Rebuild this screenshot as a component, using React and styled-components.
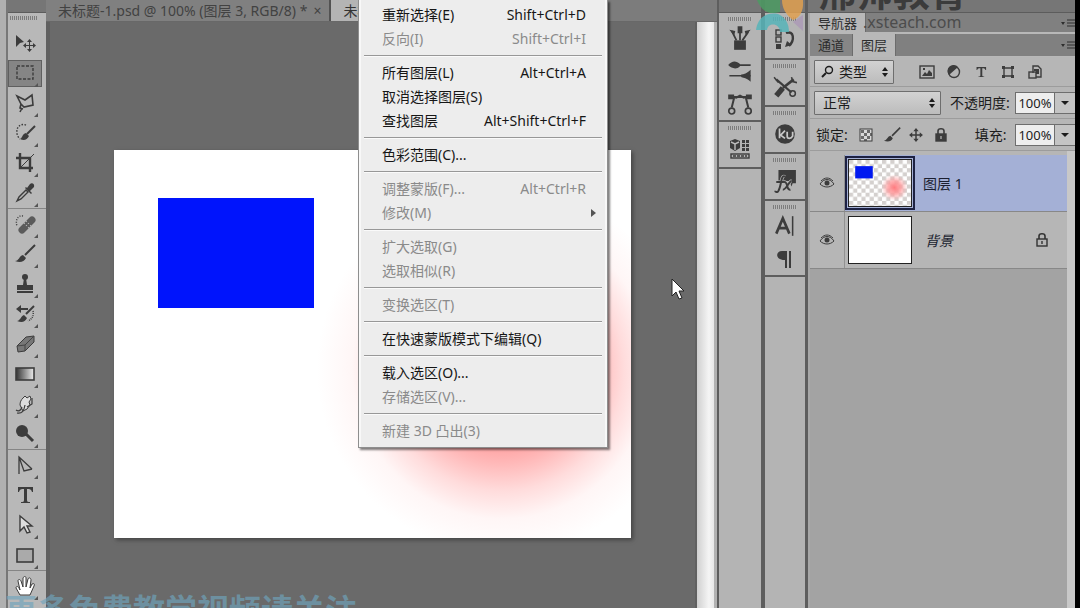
import React from "react";
import styled, { createGlobalStyle, css } from "styled-components";

const Global = createGlobalStyle`
  * { box-sizing: border-box; }
  html, body { margin: 0; background: #6a6a6a; }
  body { font-family: "Noto Sans", "Noto Sans CJK SC", sans-serif; color: #1c1c1c; }
  button, input, select { font: inherit; color: inherit; margin: 0; padding: 0; border: 0; background: none; border-radius: 0; }
  svg { display: block; }
`;

const Screen = styled.div`
  position: relative;
  display: flex;
  height: 100vh;
  overflow: hidden;
`;

/* ---------- tool bar ---------- */
const WindowEdge = styled.div`
  flex: none;
  width: 8px;
  background: #b0b0b0;
  border-right: 2px solid #777;
`;
const Toolbar = styled.aside`
  flex: none;
  width: 38px;
  background: #b8b8b8;
`;
const DockHeader = styled.div`
  flex: none;
  height: 13px;
  background: #767676;
  border-bottom: 1px solid #5c5c5c;
`;
const Grip = styled.div`
  width: ${(p) => p.$w || 24}px;
  height: 4px;
  margin: ${(p) => p.$m || "0 auto"};
  background: repeating-linear-gradient(90deg, #7c7c7c 0 1px, #b8b8b8 1px 2px);
`;
const ToolGroup = styled.div`
  display: flex;
  flex-direction: column;
  & + & { border-top: 1px solid #858585; }
`;
const Tool = styled.button`
  position: relative;
  height: 30px;
  display: grid;
  place-items: center;
  padding-right: 4px;
  color: #3c3c3c;
  ${(p) => p.$active && css`
    &::before {
      content: "";
      position: absolute;
      inset: 2px 4px 1px 0;
      background: #858585;
      border: 1px solid #5f5f5f;
    }
  `}
  svg { position: relative; }
  ${(p) => p.$more && css`
    &::after {
      content: "";
      position: absolute;
      right: 8px;
      bottom: 1px;
      border-left: 4px solid transparent;
      border-bottom: 4px solid #555;
    }
  `}
`;

/* ---------- document ---------- */
const Document = styled.main`
  flex: 1;
  min-width: 0;
  display: flex;
  flex-direction: column;
  background: #6a6a6a;
`;
const TabBar = styled.nav`
  flex: none;
  display: flex;
  height: 22px;
  background: #7c7c7c;
  border-bottom: 1px solid #686868;
`;
const DocTab = styled.button`
  display: flex;
  align-items: center;
  gap: 6px;
  padding: 0 8px 0 12px;
  font-size: 14px;
  line-height: 20px;
  white-space: nowrap;
  color: ${(p) => (p.$active ? "#333" : "#424242")};
  background: ${(p) => (p.$active ? "#b4b4b4" : "#808080")};
  border-right: 2px solid #525252;
`;
const Viewport = styled.div`
  flex: 1;
  min-height: 0;
  display: flex;
`;
const Stage = styled.div`
  flex: 1;
  display: flex;
  justify-content: center;
  align-items: flex-start;
  padding-top: 128px;
  border-left: 4px solid #606060;
  border-right: 2px solid #606060;
`;
const Canvas = styled.div`
  position: relative;
  width: 517px;
  height: 388px;
  overflow: hidden;
  background: radial-gradient(circle at 388px 219px, #ff5c5c 0, #ff9090 60px, #ffb8b8 94px, #ffdcdc 122px, #fff6f6 150px, #fff 185px);
`;
const CanvasShadow = styled.div`
  box-shadow: 2px 2px 4px #444;
`;
const BlueBox = styled.div`
  position: absolute;
  left: 44px;
  top: 48px;
  width: 156px;
  height: 110px;
  background: #0014fc;
`;
const ScrollTrack = styled.div`
  flex: none;
  width: 20px;
  background: linear-gradient(90deg, #d0d0d0, #f5f5f5 70%, #e8e8e8);
  border-right: 3px solid #b2b2b2;
`;

/* ---------- drop-down menu ---------- */
const Menu = styled.div`
  position: absolute;
  left: 358px;
  top: 0;
  width: 250px;
  padding: 3px 5px 4px;
  background: #ededed;
  border: solid #8e8e8e;
  border-width: 0 1px 1px;
  box-shadow: inset 2px 0 #f8f8f8, inset -2px 0 #f8f8f8, 2px 2px 2px rgba(0, 0, 0, 0.5);
`;
const MenuItem = styled.button`
  display: flex;
  align-items: center;
  justify-content: space-between;
  width: 100%;
  height: 24px;
  padding: 0 16px 0 18px;
  font-size: 14px;
  line-height: 24px;
  white-space: nowrap;
  color: #161616;
  &:disabled { color: #8a8a8a; }
`;
const Divider = styled.hr`
  height: 2px;
  margin: 4px 0;
  border: 0;
  border-top: 1px solid #989898;
  background: #fafafa;
`;
const SubArrow = styled.span`
  margin-right: -10px;
  border: 4px solid transparent;
  border-left: 5px solid #555;
  border-right: 0;
`;

/* ---------- icon docks ---------- */
const Dock = styled.aside`
  flex: none;
  width: ${(p) => p.$w}px;
  background: #b4b4b4;
  border-left: ${(p) => p.$edge}px solid #5e5e5e;
`;
const DockSection = styled.section`
  display: flex;
  flex-direction: column;
  padding-top: 4px;
  border-bottom: 2px solid #5e5e5e;
`;
const DockButton = styled.button`
  display: grid;
  place-items: center;
  width: 100%;
  height: ${(p) => p.$h || 38}px;
  color: #3c3c3c;
`;

/* ---------- layers panel ---------- */
const Panel = styled.section`
  flex: none;
  width: 270px;
  display: flex;
  flex-direction: column;
  background: #a3a3a3;
  border-left: 3px solid #5e5e5e;
  box-shadow: inset 2px 0 #a8a8a8;
  overflow: hidden;
`;
const PanelTabs = styled.div`
  flex: none;
  display: flex;
  align-items: stretch;
  height: ${(p) => p.$h}px;
  margin-left: 2px;
  background: #808080;
  border-bottom: ${(p) => p.$line}px solid #b8b8b8;
`;
const PanelTab = styled.button`
  padding: 0 8px;
  font-size: 13px;
  line-height: 16px;
  white-space: nowrap;
  color: #2c2c2c;
  background: ${(p) => (p.$active ? "#b8b8b8" : "#868686")};
  border-right: 1px solid #6c6c6c;
`;
const PanelMenu = styled.button`
  margin-left: auto;
  color: #2e2e2e;
`;
const Row = styled.div`
  flex: none;
  display: flex;
  align-items: center;
  height: ${(p) => p.$h}px;
  margin-left: 2px;
  padding-left: ${(p) => p.$pad || 4}px;
  background: #b6b6b6;
  border-bottom: 1px solid #9c9c9c;
  white-space: nowrap;
`;
const SelectBox = styled.div`
  position: relative;
  flex: none;
  display: flex;
  align-items: center;
  width: ${(p) => p.$w}px;
  height: 24px;
  background: linear-gradient(#d2d2d2, #bcbcbc);
  border: 1px solid #6e6e6e;
  border-radius: 1px;
  select {
    appearance: none;
    width: 100%;
    height: 100%;
    padding-left: ${(p) => p.$text}px;
    font-size: 14px;
    line-height: 20px;
    outline: 0;
  }
  svg { position: absolute; pointer-events: none; }
  .search { left: 6px; }
  .arrows { right: 4px; }
`;
const IconRow = styled.div`
  display: flex;
  align-items: center;
  gap: ${(p) => p.$gap}px;
  margin-left: ${(p) => p.$ml}px;
`;
const IconButton = styled.button`
  display: grid;
  place-items: center;
  width: 16px;
  height: 20px;
  color: #3c3c3c;
`;
const Label = styled.label`
  flex: none;
  font-size: 14px;
  line-height: 20px;
  margin-left: ${(p) => p.$ml || 0}px;
`;
const Percent = styled.div`
  flex: none;
  display: flex;
  width: 60px;
  height: 22px;
  margin-left: auto;
  border: 1px solid #6e6e6e;
  border-right: 0;
  background: #c4c4c4;
  input {
    width: 39px;
    text-align: center;
    font-size: 13px;
    background: #eee;
    border-right: 1px solid #6e6e6e;
    outline: 0;
  }
  button { flex: 1; display: grid; place-items: center; }
`;
const LayerList = styled.ul`
  list-style: none;
  margin: 0 8px 0 2px;
  padding: 0;
  box-shadow: 8px 0 #c8c8c8;
  border-top: 4px solid #b6b6b6;
  flex: 1;
`;
const Layer = styled.li`
  display: flex;
  align-items: center;
  height: 57px;
  background: ${(p) => (p.$active ? "#a4b0d6" : "#b6b6b6")};
  border-bottom: 1px solid #888;
  font-size: 14px;
  color: #1b1f30;
`;
const Eye = styled.button`
  flex: none;
  display: grid;
  place-items: center;
  width: 35px;
  height: 100%;
  background: #b6b6b6;
  border-right: 1px solid #929292;
  color: #3c3c3c;
`;
const Thumb = styled.div`
  flex: none;
  width: 70px;
  height: 54px;
  padding: 1px;
  margin: 0 8px 0 0;
  border: 2px solid ${(p) => (p.$active ? "#1d2142" : "transparent")};
  svg { width: 100%; height: 100%; border: 1px solid #222; background: #fff; }
`;
const LayerName = styled.span`
  flex: 1;
  font-style: ${(p) => (p.$italic ? "italic" : "normal")};
  padding-left: ${(p) => (p.$italic ? 2 : 0)}px;
`;
const LayerLock = styled.span`
  margin-right: 18px;
  color: #333;
`;
const ScreenEdge = styled.div`
  flex: none;
  width: 5px;
  background: #000;
`;

/* ---------- overlays ---------- */
const Brand = styled.div`
  position: absolute;
  right: 113px;
  top: -26px;
  pointer-events: none;
  color: #3b3b3b;
  strong {
    display: block;
    font-size: 37px;
    line-height: 38px;
    font-weight: 700;
  }
  span {
    display: block;
    margin-left: 44px;
    font-size: 16px;
    line-height: 20px;
    color: #4c4c4c;
  }
`;
const BrandMark = styled.svg`
  position: absolute;
  right: 275px;
  top: 0;
`;
const Caption = styled.div`
  position: absolute;
  left: 5px;
  bottom: -18px;
  font-size: 32px;
  line-height: 32px;
  font-weight: 700;
  white-space: nowrap;
  color: #70a5bd;
  opacity: 0.65;
  pointer-events: none;
`;
const Pointer = styled.svg`
  position: absolute;
  left: 671px;
  top: 278px;
  pointer-events: none;
`;

const S = ({ children, w = 22, h = 22, box = "0 0 22 22", ...rest }) => (
  <svg width={w} height={h} viewBox={box} fill="none" stroke="currentColor" strokeWidth="1.4" aria-hidden="true" {...rest}>
    {children}
  </svg>
);
const solid = { fill: "currentColor", stroke: "none" };

const FourWay = ({ x = 0, y = 0 }) => (
  <g transform={`translate(${x} ${y})`}>
    <path d="M5.500 1v9M1 5.500h9" />
    <path {...solid} d="M5.500-1 8 2H3zM5.500 12 8 9H3zM-1 5.500 2 3v5zM12 5.500 9 3v5z" />
  </g>
);

const icons = {
  move: <S><path {...solid} d="M2 3v12l4-4 4-1z" /><g strokeWidth="1"><FourWay x={10} y={8} /></g></S>,
  marquee: <S><rect x="3" y="4" width="16" height="13" strokeDasharray="3 1.500" /></S>,
  lasso: <S><path d="M3 4l8 4 7-5 1 10-9 2-3-3zM7 12l-1 4 3 1M8 16l-2 4" strokeWidth="1.600" /></S>,
  quick: <S><path strokeDasharray="1.500 1.500" d="M12 3C7 1 2 5 3 11c0 3 2 5 3 6" /><path {...solid} d="M6 17c2 0 2-5 6-6l3 3c-2 4-5 5-9 3z" /><path d="M13 12l8-8" strokeWidth="2" /></S>,
  crop: <S strokeWidth="2.400"><path d="M6 1v15h13M2 6h14v14" /><path d="M7 15L20 2" strokeWidth="1" /></S>,
  eyedrop: <S><path d="M3 19l2-4 7-7 2 2-7 7z" /><path {...solid} d="M11 6l6 6 1-1-2-2 4-4c1-3-2-5-4-3l-3 4-1-1z" /></S>,
  heal: <S><path strokeDasharray="1 1.500" d="M9 3C4 2 1 7 3 13" /><path d="M8 17L18 7" strokeWidth="7" strokeLinecap="round" opacity=".75" /><path d="M10 10l5 5M12 8l5 5" stroke="#bbb" strokeDasharray="1 2" /></S>,
  brush: <S><path d="M11 12L21 2" strokeWidth="2" /><path {...solid} d="M1 18c4 0 4-5 8-6l3 3c-2 4-6 5-11 3z" /></S>,
  stamp: <S><circle cx="11" cy="4" r="3" {...solid} /><path {...solid} d="M10 5h2l1 7h6v5H3v-5h6z" /><path d="M3 19h16" strokeWidth="2" /></S>,
  history: <S><path d="M12 11l8-8" strokeWidth="2" /><path {...solid} d="M3 18c3 0 4-5 7-6l3 3c-2 4-5 5-10 3zM2 6l5-4v3h7v2H7v3z" /><path d="M19 8c1 5-1 8-5 10" strokeDasharray="1 1" /></S>,
  eraser: <S><path d="M3 13L12 4l8-1v6l-9 9-7 1z" fill="#777" strokeWidth="1" /><path d="M3 13l8-1 9-9M11 12v6" stroke="#444" strokeWidth="1" /></S>,
  gradient: <S><defs><linearGradient id="tone"><stop stopColor="#333" /><stop offset="1" stopColor="#eee" /></linearGradient></defs><rect x="2" y="5" width="18" height="12" fill="url(#tone)" strokeWidth="1.600" /></S>,
  smudge: <S><path d="M8 16l-2-4c0-3 1-5 3-7l2-2 2 2 3-2 1 3-2 3 1 3-3 4-4 2z" fill="#ddd" strokeWidth="1" /><path d="M2 17c3 2 5 0 6-3M3 20c5 1 7-2 8-8M13 14l5-3V5" strokeWidth="1.200" /></S>,
  dodge: <S><circle cx="8" cy="8" r="6" {...solid} /><path d="M12 11l7 7" strokeWidth="3" /></S>,
  pen: <S><path d="M5 20V3l13 12M5 3l5 14 8-2" strokeWidth="1.300" /></S>,
  type: <S><path {...solid} d="M4 3h15v5h-1c-1-3-2-3-5-3v11c0 2 1 2 3 2v1H7v-1c2 0 3 0 3-2V5C7 5 6 5 5 8H4z" /></S>,
  path: <S><path d="M6 2v15l4-4 3 6 3-1-3-6h5z" fill="#ddd" /></S>,
  rect: <S><rect x="3" y="5" width="16" height="13" fill="#aaa" strokeWidth="1.600" /></S>,
  hand: <S><path d="M6 20l-4-7c0-2 2-2 3 0l1 2L4 6c0-2 2-2 3 0l2 6V3c1-2 3-2 3 0v9l2-8c1-2 3-1 3 1l-1 8 2-4c2-1 3 0 2 2l-4 9z" fill="#fff" strokeWidth="1" /></S>,
  pot: <S w={26} h={26}><path {...solid} d="M6 13h10v8H6z" /><path d="M8 13L4 5M11 13V4M13 13l5-7" strokeWidth="1.500" /><path {...solid} d="M2 4l5 1-1 4zM9 1h4v6H9zM20 4l-5 1 1 4z" /></S>,
  brushes: <S w={26} h={26}><path d="M2 6h18M2 15h18" /><path {...solid} d="M1 6c3-4 7-4 10-1v2c-3 3-7 2-10-1zM20 10v10c-4-4-7-3-8-4v-2c2 0 5-1 8-4z" /></S>,
  clone: <S w={26} h={26}><path d="M3 5h16M6 6L4 14M16 6l2 8M7 6l4-2 4 2" strokeWidth="1.700" /><circle cx="4" cy="17" r="2.500" /><circle cx="18" cy="17" r="2.500" /><path {...solid} d="M1 3h5v4H1zM16 3h5v4h-5z" /></S>,
  threeD: <S><path {...solid} d="M1 3l5-2 5 2v7l-5 3-5-3zM13 2h3v3h-3zM17 2h3v3h-3zM13 6h3v3h-3zM17 6h3v3h-3zM13 10h3v3h-3zM17 10h3v3h-3z" /><path stroke="#bbb" d="M2 4l4 2 4-2M6 6v6" /><rect x="2" y="16" width="18" height="4" /><path strokeDasharray="3 1" d="M4 18h14" /></S>,
  actions: <S><rect x="2" y="1" width="5" height="5" /><rect x="2" y="8" width="5" height="5" /><rect x="2" y="15" width="5" height="5" {...solid} /><path d="M12 4c8-3 9 7 3 13" strokeWidth="2.400" /><path {...solid} d="M11 18l2-6 5 4z" /></S>,
  tools: <S w={24} h={24}><path d="M3 4l14 12" strokeWidth="2" /><circle cx="18" cy="17" r="2.500" /><path d="M19 4L9 12" strokeWidth="2.400" /><path d="M9 12l-6 7" strokeWidth="5" /><path d="M17 2l1 4 4 1M1 2l4 5" /></S>,
  ku: <S w={24} h={24}><circle cx="11" cy="11" r="9" {...solid} /><path d="M6 6v9M11 8l-4 4 4 3M13 9v4q0 2 2 2t3-2V9" stroke="#c8c8c8" strokeWidth="1.600" /></S>,
  fx: <S w={24} h={24}><path {...solid} d="M5 1h16v12h-3l-1 3-2-5H5z" /><path d="M11 7c-4-2-3 8-6 13-1 2-3 1-3 0M3 12h7M10 12c4-1 2 8 6 7M17 11c-2 0-5 8-8 8" stroke="#b8b8b8" strokeWidth="3" /><path d="M11 7c-4-2-3 8-6 13-1 2-3 1-3 0M3 12h7M10 12c4-1 2 8 6 7M17 11c-2 0-5 8-8 8" strokeWidth="1.800" /></S>,
  char: <S w={24} h={24}><path d="M3 18L9 4l6 14M5 13h8" strokeWidth="2.400" /><path d="M18 2v18" /></S>,
  para: <S w={22} h={22}><path {...solid} d="M12 3v9C1 13 1 3 8 3z" /><path d="M12 3v17M16 3v17" strokeWidth="2" /></S>,
};

const toolGroups = [
  ["move", "marquee", "lasso", "quick", "crop", "eyedrop"],
  ["heal", "brush", "stamp", "history", "eraser", "gradient", "smudge", "dodge"],
  ["pen", "type", "path", "rect"],
  ["hand"],
];

const menuItems = [
  ["重新选择(E)", "Shift+Ctrl+D"],
  ["反向(I)", "Shift+Ctrl+I", true],
  null,
  ["所有图层(L)", "Alt+Ctrl+A"],
  ["取消选择图层(S)"],
  ["查找图层", "Alt+Shift+Ctrl+F"],
  null,
  ["色彩范围(C)..."],
  null,
  ["调整蒙版(F)...", "Alt+Ctrl+R", true],
  ["修改(M)", "sub", true],
  null,
  ["扩大选取(G)", "", true],
  ["选取相似(R)", "", true],
  null,
  ["变换选区(T)", "", true],
  null,
  ["在快速蒙版模式下编辑(Q)"],
  null,
  ["载入选区(O)..."],
  ["存储选区(V)...", "", true],
  null,
  ["新建 3D 凸出(3)", "", true],
];

const Arrows = () => (
  <S className="arrows" w={8} h={12} box="0 0 8 12"><path {...solid} d="M4 1l3 4H1zM4 11l3-4H1z" /></S>
);
const Down = () => <S w={8} h={6} box="0 0 8 6"><path {...solid} d="M0 1h8L4 5z" /></S>;
const Burger = () => <S w={14} h={12} box="0 0 14 12"><path {...solid} d="M0 5h4L2 8z" /><path d="M6 3h8M6 6h8M6 9h8" strokeWidth="1" /></S>;
const EyeIcon = () => (
  <S w={16} h={12} box="0 0 16 12"><path d="M1 7c4-6 10-6 14 0-4 4-10 4-14 0z" strokeWidth="1" /><circle cx="8" cy="6" r="2.500" {...solid} /><path d="M2 4c4-4 8-4 12 0" strokeWidth="1" /></S>
);
const Picture = () => <S w={16} h={14} box="0 0 16 14"><rect x="1" y="1" width="14" height="12" /><path {...solid} d="M3 11l3-4 2 2 2-4 3 3v3zM4 3h2v2H4z" /></S>;
const Adjust = () => <S w={14} h={14} box="0 0 14 14"><circle cx="7" cy="7" r="5.500" /><path {...solid} d="M2 10A6 6 0 0 1 11 2z" /></S>;
const Shape = () => <S w={14} h={14} box="0 0 14 14"><path d="M3 3h8v8H3z" /><path {...solid} d="M1 1h3v3H1zM10 1h3v3h-3zM1 10h3v3H1zM10 10h3v3h-3z" /></S>;
const Smart = () => <S w={14} h={14} box="0 0 14 14"><path d="M5 8V1h5l3 3v8H8" /><rect x="1" y="7" width="7" height="6" /><path {...solid} d="M6 4h5v5H8V6H6z" /></S>;
const Checker = () => <S w={14} h={14} box="0 0 14 14"><rect x="1" y="1" width="12" height="12" fill="#d8d8d8" strokeWidth="1" /><path {...solid} opacity=".7" d="M2 2h3v3H2zM8 2h3v3H8zM5 5h3v3H5zM2 8h3v3H2zM8 8h3v3H8zM11 5h2v3h-2zM5 11h3v2H5z" /></S>;
const Padlock = ({ open }) => (
  <S w={14} h={16} box="0 0 14 16"><path d="M4 7V4c0-3 6-3 6 0v3" strokeWidth="1.600" /><rect x="2" y="7" width="10" height="7" fill={open ? "none" : "currentColor"} /><path d="M7 9v3" stroke={open ? "currentColor" : "#aaa"} /></S>
);

const DockGroup = ({ names, h }) => (
  <DockSection>
    <Grip />
    {names.map((n) => <DockButton key={n} $h={h} aria-label={n}>{icons[n]}</DockButton>)}
  </DockSection>
);

export default function App() {
  return (
    <Screen>
      <Global />
      <WindowEdge />
      <Toolbar>
        <DockHeader />
        <Grip $w={28} $m="3px 0 8px 2px" />
        {toolGroups.map((g) => (
          <ToolGroup key={g[0]}>
            {g.map((n) => (
              <Tool key={n} aria-label={n} $active={n === "marquee"} $more={n !== "move"}>{icons[n]}</Tool>
            ))}
          </ToolGroup>
        ))}
      </Toolbar>

      <Document>
        <TabBar>
          <DocTab><span>未标题-1.psd @ 100% (图层 3, RGB/8) *</span><span>×</span></DocTab>
          <DocTab $active>未标题-2</DocTab>
        </TabBar>
        <Viewport>
          <Stage>
            <CanvasShadow><Canvas><BlueBox /></Canvas></CanvasShadow>
          </Stage>
          <ScrollTrack />
        </Viewport>
      </Document>

      <Dock $w={44} $edge={2}>
        <DockHeader />
        <DockGroup names={["pot", "brushes", "clone"]} h={33} />
        <DockGroup names={["threeD"]} h={37} />
      </Dock>
      <Dock $w={44} $edge={4}>
        <DockHeader />
        <DockGroup names={["actions"]} h={37} />
        <DockGroup names={["tools"]} h={37} />
        <DockGroup names={["ku"]} h={37} />
        <DockGroup names={["fx"]} h={37} />
        <DockGroup names={["char", "para"]} h={33} />
      </Dock>

      <Panel>
        <DockHeader />
        <PanelTabs $h={21} $line={2}>
          <PanelTab $active>导航器</PanelTab>
          <PanelMenu aria-label="menu"><Burger /></PanelMenu>
        </PanelTabs>
        <PanelTabs $h={23} $line={1}>
          <PanelTab>通道</PanelTab>
          <PanelTab $active>图层</PanelTab>
          <PanelMenu aria-label="menu"><Burger /></PanelMenu>
        </PanelTabs>
        <Row $h={30}>
          <SelectBox $w={80} $text={24}>
            <S className="search" w={13} h={14} box="0 0 13 14"><circle cx="8" cy="5" r="3.500" /><path d="M5 8l-4 4" strokeWidth="2" /></S>
            <select aria-label="类型"><option>类型</option></select>
            <Arrows />
          </SelectBox>
          <IconRow $gap={11} $ml={25}>
            <IconButton aria-label="像素"><Picture /></IconButton>
            <IconButton aria-label="调整"><Adjust /></IconButton>
            <IconButton aria-label="文字"><S w={14} h={14}>{icons.type.props.children}</S></IconButton>
            <IconButton aria-label="形状"><Shape /></IconButton>
            <IconButton aria-label="智能对象"><Smart /></IconButton>
          </IconRow>
        </Row>
        <Row $h={32}>
          <SelectBox $w={127} $text={8}>
            <select aria-label="混合模式"><option>正常</option></select>
            <Arrows />
          </SelectBox>
          <Label $ml={9} htmlFor="opacity">不透明度:</Label>
          <Percent><input id="opacity" defaultValue="100%" /><button aria-label="opacity"><Down /></button></Percent>
        </Row>
        <Row $h={32} $pad={6}>
          <Label as="span">锁定:</Label>
          <IconRow $gap={9} $ml={10}>
            <IconButton aria-label="透明像素"><Checker /></IconButton>
            <IconButton aria-label="图像像素"><S w={18} h={18}>{icons.brush.props.children}</S></IconButton>
            <IconButton aria-label="位置"><S w={16} h={16} box="-2 -2 15 15"><FourWay /></S></IconButton>
            <IconButton aria-label="全部"><Padlock /></IconButton>
          </IconRow>
          <Label $ml={26} htmlFor="fill">填充:</Label>
          <Percent><input id="fill" defaultValue="100%" /><button aria-label="fill"><Down /></button></Percent>
        </Row>
        <LayerList>
          <Layer $active>
            <Eye aria-label="图层 1"><EyeIcon /></Eye>
            <Thumb $active>
              <svg viewBox="0 0 60 45" preserveAspectRatio="none">
                <defs>
                  <pattern id="checks" width="8" height="8" patternUnits="userSpaceOnUse"><path d="M0 0h4v4H0zM4 4h4v4H4z" fill="#d4d0ce" /></pattern>
                  <radialGradient id="glow"><stop stopColor="#ff7c80" /><stop offset=".5" stopColor="#ff9c9e" stopOpacity=".8" /><stop offset="1" stopColor="#ffb0b0" stopOpacity="0" /></radialGradient>
                </defs>
                <path d="M0 0h60v45H0z" fill="url(#checks)" />
                <path d="M6 6h17v12H6z" fill="#0018f0" />
                <circle cx="44" cy="27" r="13" fill="url(#glow)" />
              </svg>
            </Thumb>
            <LayerName>图层 1</LayerName>
          </Layer>
          <Layer>
            <Eye aria-label="背景"><EyeIcon /></Eye>
            <Thumb><svg /></Thumb>
            <LayerName $italic>背景</LayerName>
            <LayerLock><Padlock open /></LayerLock>
          </Layer>
        </LayerList>
      </Panel>
      <ScreenEdge />

      <Menu role="menu">
        {menuItems.map((m, i) =>
          m ? (
            <MenuItem key={i} role="menuitem" disabled={m[2]}>
              <span>{m[0]}</span>
              {m[1] === "sub" ? <SubArrow /> : <span>{m[1]}</span>}
            </MenuItem>
          ) : (
            <Divider key={i} />
          )
        )}
      </Menu>

      <Brand><strong>邢帅教育</strong><span>.xsteach.com</span></Brand>
      <BrandMark width="50" height="34" viewBox="0 0 50 34" aria-hidden="true">
        <path d="M2 0h23v12c-10 3-18 0-23-12z" fill="#4c9b63" opacity=".85" />
        <path d="M27 0h21c1 12-4 18-10 20-7-5-11-12-11-20z" fill="#e0a050" opacity=".85" />
        <path d="M1 30c2-14 12-18 22-16 7 3 11 9 11 18H25c0-9-12-10-13-2z" fill="#56b4b8" opacity=".85" />
        <path d="M38 22l10-7v16z" fill="#a98fb8" opacity=".6" />
      </BrandMark>
      <Caption>更多免费教学视频请关注</Caption>
      <Pointer width="14" height="23" viewBox="0 0 14 23" aria-hidden="true">
        <path d="M1 1v17l4-4 3 7 3-1-3-7h5z" fill="#fff" stroke="#222" />
      </Pointer>
    </Screen>
  );
}
